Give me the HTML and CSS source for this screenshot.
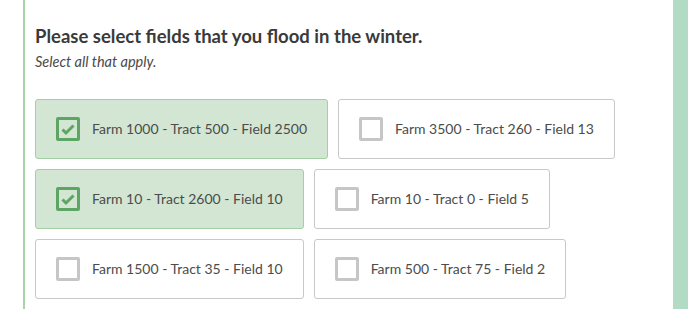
FILE: index.html
```html
<!DOCTYPE html>
<html lang="en">
<head>
    <meta charset="UTF-8">
    <meta name="viewport" content="width=device-width, initial-scale=1.0">
    <title>Flooded Fields</title>
    <link rel="stylesheet" href="styles.css">
</head>
<body>
    <div class="page">
        <!-- Question block -->
        <div class="question">
            <h3 class="question-title">Please select fields that you flood in the winter.</h3>
            <p class="question-hint">Select all that apply.</p>
            <div class="choices">
                <label class="choice checked">
                    <span class="box"><svg viewBox="0 0 18 18" width="18" height="18"><polyline points="3.5,9.5 7,13 14.5,5.5"/></svg></span>
                    <span class="choice-text">Farm 1000 - Tract 500 - Field 2500</span>
                </label>
                <label class="choice">
                    <span class="box"></span>
                    <span class="choice-text">Farm 3500 - Tract 260 - Field 13</span>
                </label>
                <label class="choice checked">
                    <span class="box"><svg viewBox="0 0 18 18" width="18" height="18"><polyline points="3.5,9.5 7,13 14.5,5.5"/></svg></span>
                    <span class="choice-text">Farm 10 - Tract 2600 - Field 10</span>
                </label>
                <label class="choice">
                    <span class="box"></span>
                    <span class="choice-text">Farm 10 - Tract 0 - Field 5</span>
                </label>
                <label class="choice">
                    <span class="box"></span>
                    <span class="choice-text">Farm 1500 - Tract 35 - Field 10</span>
                </label>
                <label class="choice">
                    <span class="box"></span>
                    <span class="choice-text">Farm 500 - Tract 75 - Field 2</span>
                </label>
            </div>
        </div>
        <!-- Right side strip -->
        <div class="side-strip"></div>
    </div>
</body>
</html>
```

FILE: styles.css
```css
body {
    margin: 0;
    font-family: Lato, "Open Sans", Arial, sans-serif;
    background: #fff;
    color: #4a4a4a;
}
.page {
    display: flex;
    height: 309px;
    overflow: hidden;
}
.question {
    flex: 1;
    margin-left: 23px;
    border-left: 2px solid #a8d4a8;
    padding: 24px 10px 0 10px;
}
.question-title {
    margin: 0;
    font-size: 18.5px;
    line-height: 24px;
    font-weight: 700;
    color: #3a3a3a;
}
.question-hint {
    margin: 4px 0 0;
    font-size: 14.5px;
    line-height: 20px;
    font-style: italic;
    color: #4a4a4a;
}
.choices {
    display: flex;
    flex-wrap: wrap;
    gap: 10px;
    margin-top: 27px;
}
.choice {
    display: flex;
    align-items: center;
    gap: 12px;
    padding: 17px 20px;
    border: 1px solid #c8c8c8;
    border-radius: 3px;
    background-color: #fff;
    cursor: pointer;
}
.choice.checked {
    background-color: #d3e6d3;
    border-color: #a3cfa3;
}
.box {
    width: 24px;
    height: 24px;
    box-sizing: border-box;
    border: 3px solid #c6c6c6;
    border-radius: 2px;
    background-color: #fff;
    display: flex;
    align-items: center;
    justify-content: center;
}
.choice.checked .box {
    border-color: #5ea462;
    background-color: transparent;
}
.box svg polyline {
    fill: none;
    stroke: #5ea462;
    stroke-width: 3;
}
.choice-text {
    font-size: 14px;
    line-height: 24px;
    color: #4c4c4c;
}
.side-strip {
    width: 15px;
    background-color: #b2dbc5;
}
```
